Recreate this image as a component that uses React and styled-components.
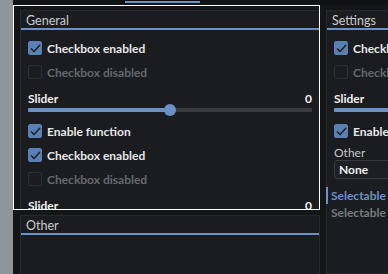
import styled, { createGlobalStyle } from "styled-components";

const Global = createGlobalStyle`
  html, body { margin: 0; padding: 0; background: #141517; }
  body { font-family: Lato, "Noto Sans", sans-serif; }
  * { box-sizing: border-box; }
`;

const Screen = styled.div`
  display: flex;
  width: 388px;
  height: 274px;
  overflow: hidden;
  background: #141517;
  color: #e4e5e7;
  font-size: 12px;
`;

const SideStrip = styled.div`
  width: 13px;
  flex: none;
  background: #8e969a;
`;

const Main = styled.div`
  flex: 1;
  display: flex;
  flex-direction: column;
  min-width: 0;
`;

const TopBar = styled.div`
  height: 5px;
  flex: none;
  padding: 1px 0 0 112px;
  background: #111214;
`;

const TabLine = styled.div`
  width: 75px;
  height: 2px;
  background: #6c91c6;
`;

const Body = styled.div`
  flex: 1;
  display: flex;
  min-height: 0;
`;

const LeftCol = styled.div`
  width: 307px;
  flex: none;
  display: flex;
  flex-direction: column;
`;

const ScrollBox = styled.div`
  height: 205px;
  flex: none;
  border: 1px solid #ffffff;
  overflow: hidden;
  padding: 4px 0 0 6px;
`;

const RightCol = styled.div`
  flex: 1;
  padding: 5px 0 0 6px;
  min-width: 0;
  display: flex;
  overflow: hidden;
`;

const Panel = styled.div`
  background: #1b1c1f;
  border: 1px solid #26282b;
  border-right: ${(p) => (p.$open ? "none" : "1px solid #26282b")};
  flex: ${(p) => (p.$grow ? 1 : "none")};
  width: ${(p) => (p.$width ? `${p.$width}px` : "auto")};
  min-width: 0;
  white-space: nowrap;
`;

const OtherPanel = styled(Panel)`
  margin: 5px 0 0 7px;
  border-bottom: none;
`;

const PanelHeader = styled.div`
  height: 19px;
  padding: 1px 5px 0;
  display: flex;
  align-items: center;
  color: #c9cbce;
  font-size: 12.5px;
  border-bottom: 2px solid #6c91c6;
`;

const Content = styled.div`
  padding: 6px 7px 0 7px;
  display: flex;
  flex-direction: column;
`;

const CheckRow = styled.div`
  height: 24px;
  display: flex;
  align-items: center;
  gap: 5px;
  font-weight: 700;
  color: ${(p) => (p.$disabled ? "#66686c" : "#e6e7e9")};
  margin-top: ${(p) => p.$mt || 0}px;
`;

const Box = styled.div`
  width: 14px;
  height: 14px;
  border-radius: 2px;
  flex: none;
  display: flex;
  align-items: center;
  justify-content: center;
  background: ${(p) => (p.$checked ? "#5a7fb3" : "transparent")};
  border: 1px solid ${(p) => (p.$checked ? "#5a7fb3" : "#2d2f33")};
`;

const SliderBlock = styled.div`
  margin-top: 6px;
  display: flex;
  flex-direction: column;
  gap: 2px;
`;

const SliderLabel = styled.div`
  height: 16px;
  display: flex;
  align-items: center;
  justify-content: space-between;
  font-weight: 700;
  color: #f0f1f2;
`;

const Track = styled.div`
  position: relative;
  height: 4px;
  background: #3b3c3f;
  border-radius: 1px;
`;

const Fill = styled.div`
  height: 100%;
  background: #6c91c6;
  border-radius: 1px;
`;

const Thumb = styled.div`
  position: absolute;
  top: -4px;
  width: 12px;
  height: 12px;
  margin-left: -6px;
  border-radius: 50%;
  background: #6c91c6;
`;

const FieldLabel = styled.div`
  margin-top: 1px;
  height: 16px;
  display: flex;
  align-items: center;
  color: #c3c5c8;
`;

const Select = styled.div`
  height: 19px;
  border: 1px solid #393b3f;
  border-radius: 3px;
  background: #1e1f22;
  display: flex;
  align-items: center;
  padding-left: 4px;
  font-weight: 700;
  color: #eceef0;
`;

const Selectable = styled.div`
  margin-left: -8px;
  height: 17px;
  display: flex;
  align-items: center;
  padding-left: ${(p) => (p.$active ? 3 : 5)}px;
  border-left: ${(p) => (p.$active ? "2px solid #6c91c6" : "none")};
  color: ${(p) => (p.$active ? "#6c91c6" : "#77797d")};
  font-weight: 700;
  margin-top: ${(p) => p.$mt || 0}px;
`;

function Check() {
  return (
    <svg width="11" height="9" viewBox="0 0 11 9">
      <polyline points="1,4.5 4,7.5 10,1" fill="none" stroke="#1b1c1f" strokeWidth="1.4" />
    </svg>
  );
}

function CheckItem({ label, checked, disabled, mt }) {
  return (
    <CheckRow $disabled={disabled} $mt={mt}>
      <Box $checked={checked}>{checked && <Check />}</Box>
      {label}
    </CheckRow>
  );
}

function Slider({ value = 0, pct }) {
  return (
    <SliderBlock>
      <SliderLabel>
        <span>Slider</span>
        <span>{value}</span>
      </SliderLabel>
      <Track>
        <Fill style={{ width: `${pct}%` }} />
        <Thumb style={{ left: `${pct}%` }} />
      </Track>
    </SliderBlock>
  );
}

export default function App() {
  return (
    <>
      <Global />
      <Screen>
        <SideStrip />
        <Main>
          <TopBar>
            <TabLine />
          </TopBar>
          <Body>
            <LeftCol>
              <ScrollBox>
                <Panel $open>
                  <PanelHeader>General</PanelHeader>
                  <Content>
                    <CheckItem label="Checkbox enabled" checked />
                    <CheckItem label="Checkbox disabled" disabled />
                    <Slider pct={50} />
                    <CheckItem label="Enable function" checked mt={7} />
                    <CheckItem label="Checkbox enabled" checked />
                    <CheckItem label="Checkbox disabled" disabled />
                    <Slider pct={50} />
                  </Content>
                </Panel>
              </ScrollBox>
              <OtherPanel $grow>
                <PanelHeader>Other</PanelHeader>
              </OtherPanel>
            </LeftCol>
            <RightCol>
              <Panel $open $width={300}>
                <PanelHeader>Settings</PanelHeader>
                <Content>
                  <CheckItem label="Checkbox enabled" checked />
                  <CheckItem label="Checkbox disabled" disabled />
                  <Slider pct={50} />
                  <CheckItem label="Enable function" checked mt={7} />
                  <FieldLabel>Other</FieldLabel>
                  <Select>None</Select>
                  <Selectable $active $mt={8}>Selectable element 1</Selectable>
                  <Selectable>Selectable element 2</Selectable>
                </Content>
              </Panel>
            </RightCol>
          </Body>
        </Main>
      </Screen>
    </>
  );
}
